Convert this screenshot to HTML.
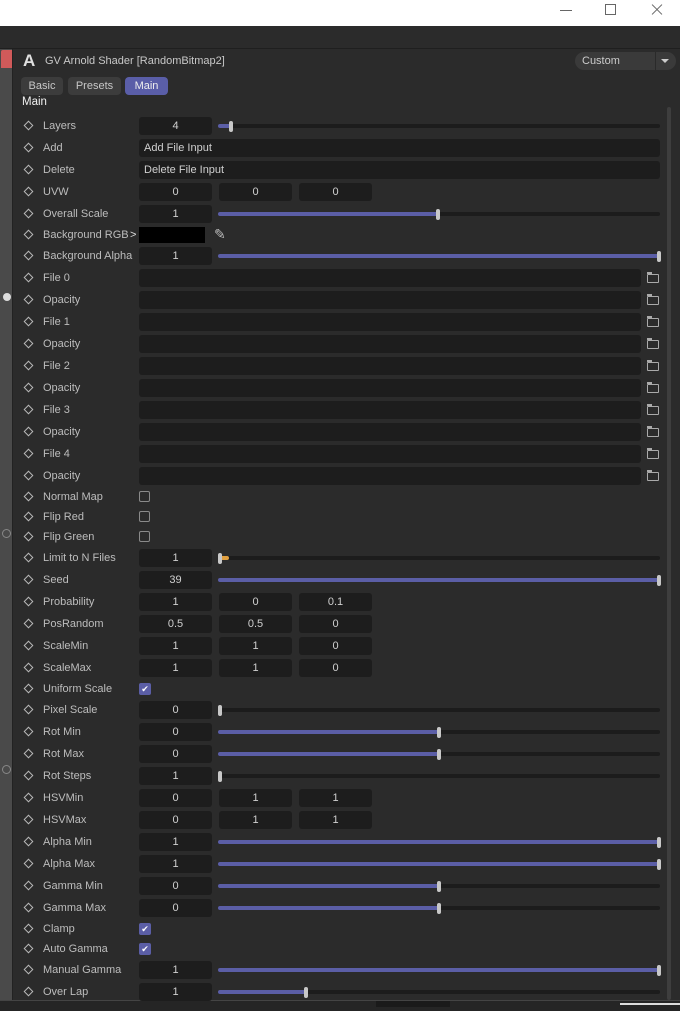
<!DOCTYPE html>
<html><head><meta charset="utf-8"><style>
*{margin:0;padding:0;box-sizing:border-box}
body{width:680px;height:1011px;overflow:hidden;background:#2b2b2b;font-family:"Liberation Sans",sans-serif;font-size:11px;color:#c8c8c8;position:relative}
.a{position:absolute}
.top{left:0;top:0;width:680px;height:26px;background:#fff}
.row{position:absolute;left:0;width:670px;height:22px}
.d{position:absolute;left:25px;top:7px;width:7px;height:7px;border:1.5px solid #b8b8b8;transform:rotate(45deg)}
.l{position:absolute;left:43px;top:0;line-height:22px;white-space:nowrap;color:#bdbdbd}
.f{position:absolute;top:2px;height:18px;background:#1d1d1d;border-radius:3px;text-align:center;line-height:18px;color:#d0d0d0}
.n{left:139px;width:73px}
.v2{left:219px;width:73px}
.v3{left:299px;width:73px}
.w{left:139px;width:521px;text-align:left;padding-left:5px}
.fl{left:139px;width:502px}
.tr{position:absolute;left:218px;width:442px;top:9px;height:4px;background:#1c1c1c;border-radius:2px}
.fi{position:absolute;left:0;top:0;height:4px;background:#5b5ea6;border-radius:2px}
.h{position:absolute;top:-3px;width:4px;height:11px;background:#c8c8c8;border-radius:2px}
.cb{position:absolute;left:139px;top:5px;width:11px;height:11px;border:1.5px solid #8a8a8a;border-radius:2px}
.ck{position:absolute;left:139px;top:5px;width:12px;height:12px;background:#5b5ea6;border-radius:2px;color:#fff;font-size:9px;line-height:12px;text-align:center}
.fo{position:absolute;left:647px;top:7px;width:12px;height:9px;border:1.3px solid #aaa;border-radius:1px}
.fo:before{content:"";position:absolute;left:-1px;top:-3px;width:5px;height:2px;background:#aaa}
</style></head><body>
<div class="a top"></div>
<div class="a" style="left:560px;top:10px;width:12px;height:1px;background:#666"></div>
<div class="a" style="left:605px;top:4px;width:11px;height:11px;border:1px solid #666"></div>
<div class="a" style="left:650px;top:9px;width:14px;height:1px;background:#666;transform:rotate(45deg)"></div>
<div class="a" style="left:650px;top:9px;width:14px;height:1px;background:#666;transform:rotate(-45deg)"></div>
<div class="a" style="left:0;top:48px;width:680px;height:1px;background:#1f1f1f"></div>
<div class="a" style="left:0;top:49px;width:12px;height:952px;background:#4a4a4a"></div>
<div class="a" style="left:12px;top:49px;width:1px;height:952px;background:#222"></div>
<div class="a" style="left:1px;top:50px;width:11px;height:18px;background:#d05a5a;border-radius:2px 0 0 0"></div>
<div class="a" style="left:3px;top:293px;width:8px;height:8px;border-radius:50%;background:#ddd"></div>
<div class="a" style="left:2px;top:529px;width:9px;height:9px;border-radius:50%;border:1px solid #888"></div>
<div class="a" style="left:2px;top:765px;width:9px;height:9px;border-radius:50%;border:1px solid #888"></div>
<div class="a" style="left:23px;top:51px;font-size:17px;font-weight:bold;color:#e0e0e0">A</div>
<div class="a" style="left:45px;top:55px;color:#c8c8c8">GV Arnold Shader [RandomBitmap2]</div>
<div class="a" style="left:575px;top:52px;width:101px;height:18px;background:#3a3a3a;border-radius:9px"></div>
<div class="a" style="left:582px;top:55px;color:#ccc">Custom</div>
<div class="a" style="left:655px;top:52px;width:1px;height:18px;background:#2a2a2a"></div>
<div class="a" style="left:661px;top:59px;width:0;height:0;border-left:4px solid transparent;border-right:4px solid transparent;border-top:4px solid #ccc"></div>
<div class="a" style="left:21px;top:77px;width:42px;height:18px;background:#3c3c3c;border-radius:4px;text-align:center;line-height:18px">Basic</div>
<div class="a" style="left:68px;top:77px;width:53px;height:18px;background:#3c3c3c;border-radius:4px;text-align:center;line-height:18px">Presets</div>
<div class="a" style="left:125px;top:77px;width:43px;height:18px;background:#5a5ea8;border-radius:4px;text-align:center;line-height:18px;color:#eee">Main</div>
<div class="a" style="left:22px;top:96px;color:#f0f0f0;font-size:11.5px">Main</div>
<div class="a" style="left:667px;top:107px;width:4px;height:893px;background:#3e3e3e;border-radius:2px"></div>
<div class="a" style="left:0;top:1000px;width:680px;height:1px;background:#444"></div>
<div class="a" style="left:0;top:1001px;width:680px;height:10px;background:#252525"></div>
<div class="a" style="left:376px;top:1001px;width:74px;height:6px;background:#1a1a1a"></div>
<div class="a" style="left:620px;top:1003px;width:60px;height:2px;background:#ddd"></div>

<div class="row" style="top:115px"><div class="d"></div><div class="l">Layers</div><div class="f n">4</div><div class="tr"><div class="fi" style="width:13px"></div><div class="h" style="left:11px"></div></div></div>
<div class="row" style="top:137px"><div class="d"></div><div class="l">Add</div><div class="f w">Add File Input</div></div>
<div class="row" style="top:159px"><div class="d"></div><div class="l">Delete</div><div class="f w">Delete File Input</div></div>
<div class="row" style="top:181px"><div class="d"></div><div class="l">UVW</div><div class="f n">0</div><div class="f v2">0</div><div class="f v3">0</div></div>
<div class="row" style="top:203px"><div class="d"></div><div class="l">Overall Scale</div><div class="f n">1</div><div class="tr"><div class="fi" style="width:220px"></div><div class="h" style="left:218px"></div></div></div>
<div class="row" style="top:224px"><div class="d"></div><div class="l">Background RGB</div><div class="a" style="left:130px;top:0;line-height:22px;color:#ddd">&gt;</div><div class="a" style="left:139px;top:3px;width:66px;height:16px;background:#000"></div><div class="a" style="left:214px;top:2px;font-size:14px;color:#bbb">✎</div></div>
<div class="row" style="top:245px"><div class="d"></div><div class="l">Background Alpha</div><div class="f n">1</div><div class="tr"><div class="fi" style="width:442px"></div><div class="h" style="left:439px"></div></div></div>
<div class="row" style="top:267px"><div class="d"></div><div class="l">File 0</div><div class="f fl"></div><div class="fo"></div></div>
<div class="row" style="top:289px"><div class="d"></div><div class="l">Opacity</div><div class="f fl"></div><div class="fo"></div></div>
<div class="row" style="top:311px"><div class="d"></div><div class="l">File 1</div><div class="f fl"></div><div class="fo"></div></div>
<div class="row" style="top:333px"><div class="d"></div><div class="l">Opacity</div><div class="f fl"></div><div class="fo"></div></div>
<div class="row" style="top:355px"><div class="d"></div><div class="l">File 2</div><div class="f fl"></div><div class="fo"></div></div>
<div class="row" style="top:377px"><div class="d"></div><div class="l">Opacity</div><div class="f fl"></div><div class="fo"></div></div>
<div class="row" style="top:399px"><div class="d"></div><div class="l">File 3</div><div class="f fl"></div><div class="fo"></div></div>
<div class="row" style="top:421px"><div class="d"></div><div class="l">Opacity</div><div class="f fl"></div><div class="fo"></div></div>
<div class="row" style="top:443px"><div class="d"></div><div class="l">File 4</div><div class="f fl"></div><div class="fo"></div></div>
<div class="row" style="top:465px"><div class="d"></div><div class="l">Opacity</div><div class="f fl"></div><div class="fo"></div></div>
<div class="row" style="top:486px"><div class="d"></div><div class="l">Normal Map</div><div class="cb"></div></div>
<div class="row" style="top:506px"><div class="d"></div><div class="l">Flip Red</div><div class="cb"></div></div>
<div class="row" style="top:526px"><div class="d"></div><div class="l">Flip Green</div><div class="cb"></div></div>
<div class="row" style="top:547px"><div class="d"></div><div class="l">Limit to N Files</div><div class="f n">1</div><div class="tr"><div class="fi" style="width:11px;background:#e0a040"></div><div class="h" style="left:0"></div></div></div>
<div class="row" style="top:569px"><div class="d"></div><div class="l">Seed</div><div class="f n">39</div><div class="tr"><div class="fi" style="width:442px"></div><div class="h" style="left:439px"></div></div></div>
<div class="row" style="top:591px"><div class="d"></div><div class="l">Probability</div><div class="f n">1</div><div class="f v2">0</div><div class="f v3">0.1</div></div>
<div class="row" style="top:613px"><div class="d"></div><div class="l">PosRandom</div><div class="f n">0.5</div><div class="f v2">0.5</div><div class="f v3">0</div></div>
<div class="row" style="top:635px"><div class="d"></div><div class="l">ScaleMin</div><div class="f n">1</div><div class="f v2">1</div><div class="f v3">0</div></div>
<div class="row" style="top:657px"><div class="d"></div><div class="l">ScaleMax</div><div class="f n">1</div><div class="f v2">1</div><div class="f v3">0</div></div>
<div class="row" style="top:678px"><div class="d"></div><div class="l">Uniform Scale</div><div class="ck">✔</div></div>
<div class="row" style="top:699px"><div class="d"></div><div class="l">Pixel Scale</div><div class="f n">0</div><div class="tr"><div class="h" style="left:0"></div></div></div>
<div class="row" style="top:721px"><div class="d"></div><div class="l">Rot Min</div><div class="f n">0</div><div class="tr"><div class="fi" style="width:221px"></div><div class="h" style="left:219px"></div></div></div>
<div class="row" style="top:743px"><div class="d"></div><div class="l">Rot Max</div><div class="f n">0</div><div class="tr"><div class="fi" style="width:221px"></div><div class="h" style="left:219px"></div></div></div>
<div class="row" style="top:765px"><div class="d"></div><div class="l">Rot Steps</div><div class="f n">1</div><div class="tr"><div class="h" style="left:0"></div></div></div>
<div class="row" style="top:787px"><div class="d"></div><div class="l">HSVMin</div><div class="f n">0</div><div class="f v2">1</div><div class="f v3">1</div></div>
<div class="row" style="top:809px"><div class="d"></div><div class="l">HSVMax</div><div class="f n">0</div><div class="f v2">1</div><div class="f v3">1</div></div>
<div class="row" style="top:831px"><div class="d"></div><div class="l">Alpha Min</div><div class="f n">1</div><div class="tr"><div class="fi" style="width:442px"></div><div class="h" style="left:439px"></div></div></div>
<div class="row" style="top:853px"><div class="d"></div><div class="l">Alpha Max</div><div class="f n">1</div><div class="tr"><div class="fi" style="width:442px"></div><div class="h" style="left:439px"></div></div></div>
<div class="row" style="top:875px"><div class="d"></div><div class="l">Gamma Min</div><div class="f n">0</div><div class="tr"><div class="fi" style="width:221px"></div><div class="h" style="left:219px"></div></div></div>
<div class="row" style="top:897px"><div class="d"></div><div class="l">Gamma Max</div><div class="f n">0</div><div class="tr"><div class="fi" style="width:221px"></div><div class="h" style="left:219px"></div></div></div>
<div class="row" style="top:918px"><div class="d"></div><div class="l">Clamp</div><div class="ck">✔</div></div>
<div class="row" style="top:938px"><div class="d"></div><div class="l">Auto Gamma</div><div class="ck">✔</div></div>
<div class="row" style="top:959px"><div class="d"></div><div class="l">Manual Gamma</div><div class="f n">1</div><div class="tr"><div class="fi" style="width:442px"></div><div class="h" style="left:439px"></div></div></div>
<div class="row" style="top:981px"><div class="d"></div><div class="l">Over Lap</div><div class="f n">1</div><div class="tr"><div class="fi" style="width:88px"></div><div class="h" style="left:86px"></div></div></div>
</body></html>
